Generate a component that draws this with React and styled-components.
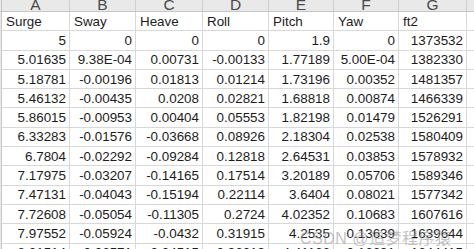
import React from 'react';
import styled, { createGlobalStyle } from 'styled-components';

const GlobalStyle = createGlobalStyle`
  html, body {
    margin: 0;
    padding: 0;
    background: #fff;
    overflow: hidden;
  }
  body {
    font-family: 'Liberation Sans', Arial, sans-serif;
  }
`;

const Sheet = styled.div`
  position: relative;
  width: 474px;
  height: 249px;
  overflow: hidden;
  background: #fff;
`;

const HeaderRow = styled.div`
  display: flex;
  height: 12px;
  background: #e9e9e9;
  border-bottom: 1px solid #c6c6c6;
  box-sizing: border-box;
`;

const HeaderCell = styled.div`
  flex: 0 0 ${p => p.$w}px;
  box-sizing: border-box;
  border-right: 1px solid #cfcfcf;
  overflow: hidden;
  text-align: center;
  color: #4a4a4a;
  font-size: 15.5px;
  line-height: 15px;

  span {
    display: block;
    margin-top: -3px;
  }
`;

const Row = styled.div`
  display: flex;
  height: 19.3px;
  box-sizing: border-box;
  border-bottom: 1px solid #d8d8d8;
`;

const Stub = styled.div`
  flex: 0 0 2px;
  box-sizing: border-box;
  background: #e9e9e9;
  border-right: 1px solid #c6c6c6;
`;

const Cell = styled.div`
  flex: 0 0 ${p => p.$w}px;
  box-sizing: border-box;
  border-right: 1px solid #d8d8d8;
  padding: 0 3px 0 4px;
  display: flex;
  align-items: center;
  justify-content: ${p => (p.$text ? 'flex-start' : 'flex-end')};
  color: #1c1c1c;
  font-size: 13.4px;
  white-space: nowrap;
  overflow: hidden;
`;

const Watermark = styled.div`
  position: absolute;
  left: 300px;
  top: 225px;
  font-family: 'Liberation Sans', 'Noto Sans CJK SC', sans-serif;
  font-size: 16px;
  color: rgba(160, 160, 160, 0.65);
  white-space: nowrap;
  letter-spacing: 0.5px;
`;

const widths = [68, 66, 67, 66, 65, 65, 68, 40];
const letters = ['A', 'B', 'C', 'D', 'E', 'F', 'G', ''];

const rows = [
  ['Surge', 'Sway', 'Heave', 'Roll', 'Pitch', 'Yaw', 'ft2'],
  ['5', '0', '0', '0', '1.9', '0', '1373532'],
  ['5.01635', '9.38E-04', '0.00731', '-0.00133', '1.77189', '5.00E-04', '1382330'],
  ['5.18781', '-0.00196', '0.01813', '0.01214', '1.73196', '0.00352', '1481357'],
  ['5.46132', '-0.00435', '0.0208', '0.02821', '1.68818', '0.00874', '1466339'],
  ['5.86015', '-0.00953', '0.00404', '0.05553', '1.82198', '0.01479', '1526291'],
  ['6.33283', '-0.01576', '-0.03668', '0.08926', '2.18304', '0.02538', '1580409'],
  ['6.7804', '-0.02292', '-0.09284', '0.12818', '2.64531', '0.03853', '1578932'],
  ['7.17975', '-0.03207', '-0.14165', '0.17514', '3.20189', '0.05706', '1589346'],
  ['7.47131', '-0.04043', '-0.15194', '0.22114', '3.6404', '0.08021', '1577342'],
  ['7.72608', '-0.05054', '-0.11305', '0.2724', '4.02352', '0.10683', '1607616'],
  ['7.97552', '-0.05924', '-0.0432', '0.31915', '4.2535', '0.13639', '1639644'],
  ['8.21514', '-0.06571', '0.04515', '0.36013', '4.41166', '0.16631', '1644415'],
];

export default function App() {
  return (
    <Sheet>
      <GlobalStyle />
      <HeaderRow>
        <Stub />
        {letters.map((l, i) => (
          <HeaderCell key={i} $w={widths[i]}>
            <span>{l}</span>
          </HeaderCell>
        ))}
      </HeaderRow>
      {rows.map((r, ri) => (
        <Row key={ri}>
          <Stub />
          {r.map((v, ci) => (
            <Cell key={ci} $w={widths[ci]} $text={ri === 0}>
              {v}
            </Cell>
          ))}
          <Cell $w={widths[7]} />
        </Row>
      ))}
      <Watermark>CSDN @追梦程序猿</Watermark>
    </Sheet>
  );
}
